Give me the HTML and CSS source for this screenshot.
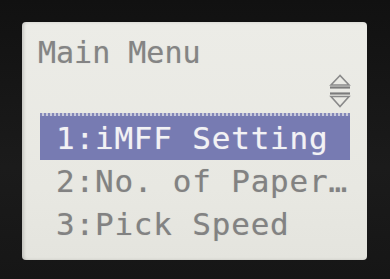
FILE: index.html
```html
<!DOCTYPE html>
<html lang="en">
<head>
    <meta charset="UTF-8">
    <meta name="viewport" content="width=device-width, initial-scale=1.0">
    <title>Main Menu</title>
    <link rel="stylesheet" href="styles.css">
</head>
<body>
    <div id="bezel">
        <div id="screen">
            <div id="title">Main Menu</div>
            <div id="scroll-row">
                <svg id="scroll-icon" width="22" height="34" viewBox="0 0 22 34">
                    <polygon points="11,1.5 2,11 20,11" fill="none" stroke="#8a8a8a" stroke-width="1.6"/>
                    <line x1="1" y1="13.5" x2="21" y2="13.5" stroke="#7c7c7c" stroke-width="2.2"/>
                    <line x1="1" y1="19.5" x2="21" y2="19.5" stroke="#7c7c7c" stroke-width="2.2"/>
                    <polygon points="2,22.5 20,22.5 11,32.5" fill="none" stroke="#8a8a8a" stroke-width="1.6"/>
                </svg>
            </div>
            <div class="menu-item selected">1:iMFF Setting</div>
            <div class="menu-item">2:No. of Paper…</div>
            <div class="menu-item">3:Pick Speed</div>
        </div>
    </div>
</body>
</html>
```

FILE: styles.css
```css
/* LCD panel styles */
body {
    margin: 0;
    padding: 0;
    background-color: #151515;
    font-family: "DejaVu Sans Mono", "Liberation Mono", monospace;
}

#bezel {
    width: 390px;
    height: 279px;
    padding: 22px 23px 19px 22px;
    box-sizing: border-box;
    background: linear-gradient(180deg, #111111 0%, #1b1b1b 60%, #161616 100%);
}

#screen {
    height: 100%;
    padding: 16px 17px 0 18px;
    box-sizing: border-box;
    background: linear-gradient(180deg, #ecece7 0%, #e8e8e2 70%, #e4e4de 100%);
    border-radius: 4px;
    box-shadow: inset 2px 0 3px rgba(0, 0, 0, 0.15);
}

#title {
    font-size: 30px;
    line-height: 30px;
    color: #848484;
    margin-left: -2px;
    text-shadow: 0 0 1px rgba(130, 130, 130, 0.4);
}

#scroll-row {
    display: flex;
    justify-content: flex-end;
    height: 45px;
    margin-right: -1px;
}

#scroll-icon {
    margin-top: 6px;
}

.menu-item {
    position: relative;
    font-size: 31px;
    line-height: 43px;
    letter-spacing: 0.8px;
    color: #828282;
    padding-left: 16px;
    white-space: nowrap;
    text-shadow: 0 0 1px rgba(130, 130, 130, 0.4);
}

.menu-item.selected {
    padding-top: 4px;
    background-color: #777bb2;
    color: #f2f2f4;
    text-shadow: 0 0 1px rgba(255, 255, 255, 0.5);
}

.menu-item.selected:before {
    content: "";
    position: absolute;
    top: 0;
    left: 0;
    right: 0;
    height: 3px;
    background: repeating-linear-gradient(90deg, #8387b9 0 2px, #c8c9da 2px 4px);
}
```
